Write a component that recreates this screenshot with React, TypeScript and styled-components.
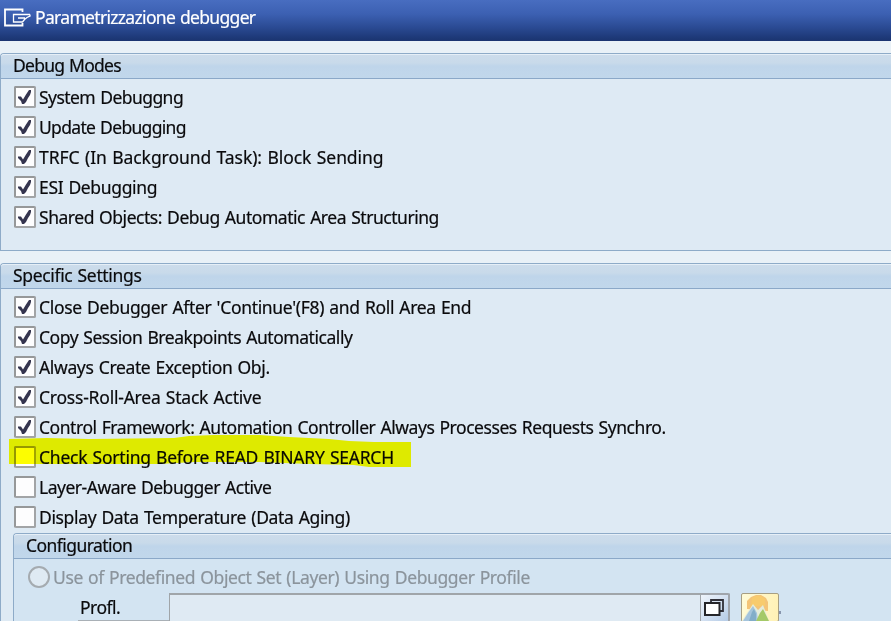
import React from "react";
import styled, { createGlobalStyle } from "styled-components";

const GlobalStyle = createGlobalStyle`
  * { box-sizing: border-box; }
  body {
    margin: 0;
    overflow: hidden;
    background: #e9f1f7;
    color: #0a0a0c;
    font-family: Tahoma, "Noto Sans", "DejaVu Sans", sans-serif;
    font-size: 17.5px;
  }
`;

const Window = styled.div`
  width: 891px;
  height: 621px;
  overflow: hidden;
  display: flex;
  flex-direction: column;
`;

const TitleBar = styled.header`
  flex: none;
  height: 41px;
  padding: 0 0 8px 4px;
  display: flex;
  align-items: center;
  gap: 4px;
  color: #fff;
  background: linear-gradient(#486dc0 0, #3c60b2 14px, #2b4b94 27px, #1d3877 38px, #1b3470 41px);
`;

const Text = styled.span<{ $spacing?: number }>`
  white-space: pre;
  line-height: 24px;
  word-spacing: 1px;
  letter-spacing: ${(p) => p.$spacing ?? 0}px;
  -webkit-text-stroke: 0.2px currentColor;
`;

const Content = styled.main`
  flex: none;
  padding-top: 12px;
  display: flex;
  flex-direction: column;
  gap: 12px;
`;

const Group = styled.section<{ $height: number; $nested?: boolean }>`
  flex: none;
  height: ${(p) => p.$height}px;
  margin-left: ${(p) => (p.$nested ? 12 : 0)}px;
  border: 1px solid #8eabc8;
  border-right: 0;
  border-radius: 4px 0 0 0;
  background: ${(p) => (p.$nested ? "#d3e4f2" : "#deeaf4")};
`;

const GroupHeader = styled.h2`
  margin: 0;
  height: 25px;
  padding: 0 0 3px 12px;
  display: flex;
  align-items: center;
  font-size: inherit;
  font-weight: normal;
  border-top: 1px solid #e6eff7;
  border-bottom: 1px solid #8ba8c8;
  border-radius: 3px 0 0 0;
  background: linear-gradient(#ccdceb 0, #c8daea 8px, #bfd5ea 11px, #c1d7eb 100%);
`;

const Options = styled.div`
  position: relative;
  padding: 3px 0 1px 13px;
`;

const OptionRow = styled.label`
  height: 30px;
  display: flex;
  align-items: center;
  gap: 3px;
`;

const Box = styled.span`
  width: 22px;
  height: 22px;
  flex: none;
  border: 2px solid #969899;
  border-right-color: #a2a4a6;
  border-bottom-color: #a2a4a6;
  border-radius: 2px;
  background: #fdfdfe;
`;

const Marker = styled.svg`
  position: absolute;
  left: 8px;
  top: 145px;
  mix-blend-mode: multiply;
  pointer-events: none;
`;

const RadioRow = styled.label`
  height: 30px;
  margin-top: 3px;
  padding-left: 14px;
  display: flex;
  align-items: center;
  gap: 3px;
  color: #8b949c;
`;

const Radio = styled.span`
  width: 22px;
  height: 22px;
  flex: none;
  border: 2px solid #a5abb0;
  border-radius: 50%;
  background: #dfeaf3;
`;

const ProfileRow = styled.div`
  height: 29px;
  margin-top: 1px;
  padding-left: 64px;
  display: flex;
`;

const ProfileLabel = styled.div`
  width: 91px;
  height: 28px;
  padding: 2px 0 0 2px;
  border-bottom: 1px solid #a9b0b6;
`;

const ProfileInput = styled.div`
  width: 532px;
  height: 29px;
  border: 2px solid #a0a5a9;
  border-width: 2px 1px 1px 1px;
  background: #dfeaf3;
`;

const LookupButton = styled.button`
  width: 29px;
  height: 29px;
  padding: 0;
  border: 0;
  border-top: 2px solid #a0a5ac;
  border-right: 2px solid #a0a5ac;
  border-radius: 0 2px 2px 0;
  background: linear-gradient(135deg, #eef4fb, #d3e0f1 50%, #b4cbe6);
`;

const ImageButton = styled.button`
  width: 38px;
  height: 29px;
  margin-left: 11px;
  padding: 0;
  border: 1px solid #a79f83;
  border-radius: 2px;
  background: linear-gradient(100deg, #fffbd8, #fff1b4);
`;

const Dot = styled.span`
  width: 2px;
  height: 3px;
  margin: 18px 0 0 0;
  background: #8795ad;
`;

const Icon = styled.svg`
  display: block;
  flex: none;
`;

type Option = { text: string; on?: boolean; spacing?: number };

const debugModes: Option[] = [
  { text: "System Debuggng", on: true, spacing: -0.55 },
  { text: "Update Debugging", on: true, spacing: -0.68 },
  { text: "TRFC (In Background Task): Block Sending", on: true, spacing: -0.07 },
  { text: "ESI Debugging", on: true, spacing: -0.35 },
  { text: "Shared Objects: Debug Automatic Area Structuring", on: true, spacing: -0.46 },
];

const settings: Option[] = [
  { text: "Close Debugger After 'Continue'(F8) and Roll Area End", on: true, spacing: -0.33 },
  { text: "Copy Session Breakpoints Automatically", on: true, spacing: -0.45 },
  { text: "Always Create Exception Obj.", on: true, spacing: -0.35 },
  { text: "Cross-Roll-Area Stack Active", on: true, spacing: -0.22 },
  { text: "Control Framework: Automation Controller Always Processes Requests Synchro.", on: true, spacing: -0.45 },
  { text: "Check Sorting Before READ BINARY SEARCH", spacing: -0.24 },
  { text: "Layer-Aware Debugger Active", spacing: -0.48 },
  { text: "Display Data Temperature (Data Aging)", spacing: -0.35 },
];

function CheckOption({ text, on, spacing }: Option) {
  return (
    <OptionRow>
      <Box>
        {on && (
          <Icon width="18" height="18" viewBox="0 0 18 18">
            <path d="M2 8.500h3l2 3 3-5 3-4.500h2v2l-1 3-2 3-2 4-2 2H6l-1-3-3-3z" fill="#34344e" />
          </Icon>
        )}
      </Box>
      <Text $spacing={spacing}>{text}</Text>
    </OptionRow>
  );
}

export default function App() {
  return (
    <>
      <GlobalStyle />
      <Window>
        <TitleBar>
          <Icon width="27" height="20" viewBox="0 0 27 20" fill="none" stroke="#fff">
            <path d="M18.500 5V2.500H1v16h17.500V16" strokeWidth="1.8" />
            <path d="M26 7.500H9.500v7.500h9M26 7.500v1.500l-3 1.500-2.500 2-2 2.500M14 11h7" strokeWidth="1.3" />
          </Icon>
          <Text $spacing={-0.68}>Parametrizzazione debugger</Text>
        </TitleBar>
        <Content>
          <Group $height={198}>
            <GroupHeader><Text $spacing={-0.75}>Debug Modes</Text></GroupHeader>
            <Options>
              {debugModes.map((o) => <CheckOption key={o.text} {...o} />)}
            </Options>
          </Group>
          <Group $height={380}>
            <GroupHeader><Text $spacing={-0.34}>Specific Settings</Text></GroupHeader>
            <Options>
              {settings.map((o) => <CheckOption key={o.text} {...o} />)}
              <Marker width="403" height="34" viewBox="0 0 403 34">
                <path d="M0 5L38 4 80 5 165 4 180 2 205 1 250 1 280 3 320 5 340 7 365 8 402 8V33H360L345 31 300 30 250 28 185 28 150 30 100 30H0z" fill="#ff0" />
              </Marker>
            </Options>
            <Group $height={100} $nested>
              <GroupHeader><Text $spacing={-0.56}>Configuration</Text></GroupHeader>
              <RadioRow>
                <Radio />
                <Text $spacing={-0.39}>Use of Predefined Object Set (Layer) Using Debugger Profile</Text>
              </RadioRow>
              <ProfileRow>
                <ProfileLabel><Text $spacing={-0.5}>Profl.</Text></ProfileLabel>
                <ProfileInput />
                <LookupButton aria-label="Lookup">
                  <Icon width="27" height="27" viewBox="0 0 27 27">
                    <path d="M10 8V5h12v11h-3" fill="none" stroke="#303038" strokeWidth="1.8" />
                    <path d="M4 8h14.500v12H4z" fill="#fff" stroke="#252529" strokeWidth="2" />
                  </Icon>
                </LookupButton>
                <ImageButton aria-label="Layers">
                  <Icon width="36" height="27" viewBox="0 0 36 27">
                    <path d="M5 15V7l4-4 5-2h5l5 3 2 4v9z" fill="#f4c477" />
                    <path d="M10 4l4-2h5l4 3v7H9z" fill="#f8cb6d" />
                    <path d="M0 27l5-8 6-9 5 6 5-5 6 16z" fill="#e5ecdb" />
                    <path d="M1 27l5-8 5-7 4 7 1 8z" fill="#a4c4dc" />
                    <path d="M7 27l3-9 2-3 2 5v7z" fill="#82adc9" />
                    <path d="M14 27l4-8 3-4 3 6 3 6z" fill="#a4c968" />
                  </Icon>
                </ImageButton>
                <Dot />
              </ProfileRow>
            </Group>
          </Group>
        </Content>
      </Window>
    </>
  );
}
